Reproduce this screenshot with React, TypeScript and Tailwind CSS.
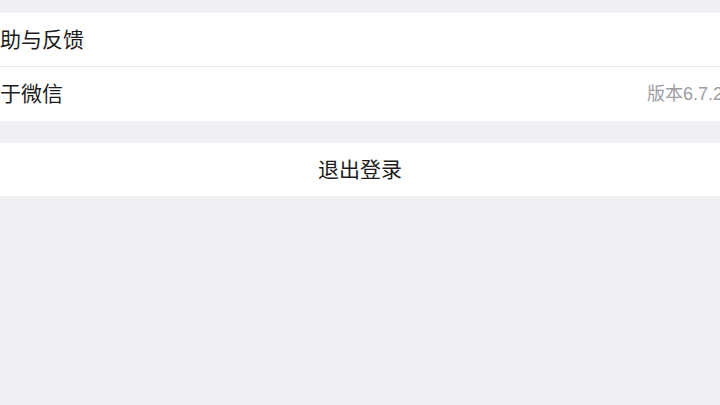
import React from "react";

const cjk = "font-['Liberation_Sans','Noto_Sans_CJK_SC',sans-serif]";

interface CellProps {
  title: string;
  detail?: string;
  last?: boolean;
}

const Cell: React.FC<CellProps> = ({ title, detail, last }) => (
  <div className="bg-white pl-[14px]">
    <div
      className={`flex h-[54px] items-center justify-between pr-[32px] ${
        last ? "" : "border-b border-[#e6e6eb]"
      }`}
    >
      <span className="text-[21px] text-[#1c1c1c]">{title}</span>
      {detail && <span className="text-[18px] text-[#9d9da2]">{detail}</span>}
    </div>
  </div>
);

export default function App() {
  return (
    <div className={`h-[405px] w-[720px] overflow-hidden bg-[#efeff4] ${cjk}`}>
      {/* settings list is wider than the visible area */}
      <div className="-mx-[35px] pt-[13px]">
        <div className="flex flex-col">
          <Cell title="帮助与反馈" />
          <Cell title="关于微信" detail="版本6.7.2" last />
        </div>

        <div className="mt-[22px] flex h-[53px] items-center justify-center bg-white">
          <span className="text-[21px] text-[#1c1c1c]">退出登录</span>
        </div>
      </div>
    </div>
  );
}
